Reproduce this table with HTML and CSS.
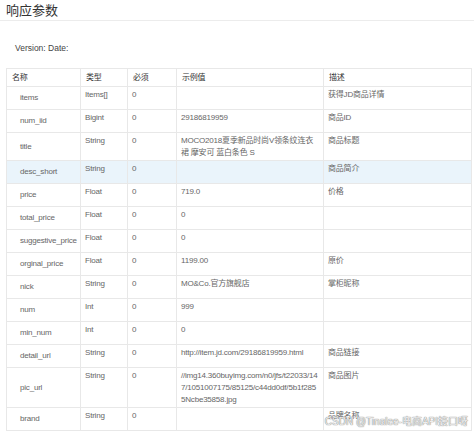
FILE: index.html
```html
<!DOCTYPE html>
<html lang="zh-CN">
<head>
<meta charset="utf-8">
<link rel="stylesheet" href="styles.css">
</head>
<body>
<div class="page">
  <h2 class="title">响应参数</h2>
  <p class="version">Version: Date:</p>
  <table class="params">
    <colgroup>
      <col class="c-name"><col class="c-type"><col class="c-req"><col class="c-ex"><col class="c-desc">
    </colgroup>
    <thead>
      <tr><th>名称</th><th>类型</th><th>必须</th><th>示例值</th><th>描述</th></tr>
    </thead>
    <tbody>
      <tr><td class="n">items</td><td>Items[]</td><td>0</td><td></td><td>获得JD商品详情</td></tr>
      <tr><td class="n">num_iid</td><td>Bigint</td><td>0</td><td>29186819959</td><td>商品ID</td></tr>
      <tr><td class="n">title</td><td>String</td><td>0</td><td>MOCO2018夏季新品时尚V领条纹连衣裙 摩安可 蓝白条色 S</td><td>商品标题</td></tr>
      <tr class="hl"><td class="n">desc_short</td><td>String</td><td>0</td><td></td><td>商品简介</td></tr>
      <tr><td class="n">price</td><td>Float</td><td>0</td><td>719.0</td><td>价格</td></tr>
      <tr><td class="n">total_price</td><td>Float</td><td>0</td><td>0</td><td></td></tr>
      <tr><td class="n">suggestive_price</td><td>Float</td><td>0</td><td>0</td><td></td></tr>
      <tr><td class="n">orginal_price</td><td>Float</td><td>0</td><td>1199.00</td><td>原价</td></tr>
      <tr><td class="n">nick</td><td>String</td><td>0</td><td>MO&amp;Co.官方旗舰店</td><td>掌柜昵称</td></tr>
      <tr><td class="n">num</td><td>Int</td><td>0</td><td>999</td><td></td></tr>
      <tr><td class="n">min_num</td><td>Int</td><td>0</td><td>0</td><td></td></tr>
      <tr><td class="n">detail_url</td><td>String</td><td>0</td><td>http://item.jd.com/29186819959.html</td><td>商品链接</td></tr>
      <tr><td class="n">pic_url</td><td>String</td><td>0</td><td class="brk">//img14.360buyimg.com/n0/jfs/t22033/147/1051007175/85125/c44dd0df/5b1f2855Ncbe35858.jpg</td><td>商品图片</td></tr>
      <tr><td class="n">brand</td><td>String</td><td>0</td><td></td><td>品牌名称</td></tr>
    </tbody>
  </table>
  <div class="watermark">CSDN @Tinalee-电商API接口呀</div>
</div>
</body>
</html>
```
FILE: styles.css
```css
html, body {
  margin: 0;
  padding: 0;
  background: #fff;
}
body {
  font-family: "Liberation Sans", "Noto Sans CJK SC", sans-serif;
  color: #555;
  overflow: hidden;
}
.page {
  position: relative;
  width: 474px;
  height: 431px;
  overflow: hidden;
}
.title {
  margin: 0;
  padding: 3px 6px 1px;
  font-size: 13px;
  line-height: 16px;
  font-weight: normal;
  color: #333;
  border-bottom: 1px solid #ececec;
}
.version {
  margin: 0;
  padding: 21px 15px 0;
  height: 27px;
  box-sizing: border-box;
  font-size: 8.5px;
  line-height: 12px;
  color: #444;
}
.params {
  margin: 20px 0 0 6px;
  width: 465px;
  border-collapse: collapse;
  table-layout: fixed;
  font-size: 8px;
  line-height: 12px;
  letter-spacing: -0.2px;
}
.c-name { width: 74px; }
.c-type { width: 47px; }
.c-req { width: 49px; }
.c-ex { width: 147px; }
.c-desc { width: 148px; }
.params th,
.params td {
  border: 1px solid #e8e8e8;
  text-align: left;
  vertical-align: top;
}
.params th {
  height: 18px;
  box-sizing: border-box;
  padding: 2px 5px;
  font-weight: normal;
  color: #333;
  vertical-align: middle;
}
.params td {
  padding: 2px 3px 1px 4px;
  color: #666;
}
.params td.n {
  padding: 5px 4px 5px 13px;
  vertical-align: middle;
  height: 12px;
  white-space: nowrap;
}
.params td.brk {
  word-break: break-all;
}
.params tr.hl td {
  background: #eaf4fb;
}
.watermark {
  position: absolute;
  right: 6px;
  bottom: 3px;
  font-size: 10px;
  line-height: 13px;
  color: #eee;
  text-shadow: 0 0 1px #777, 0 0 1px #999;
}
```
